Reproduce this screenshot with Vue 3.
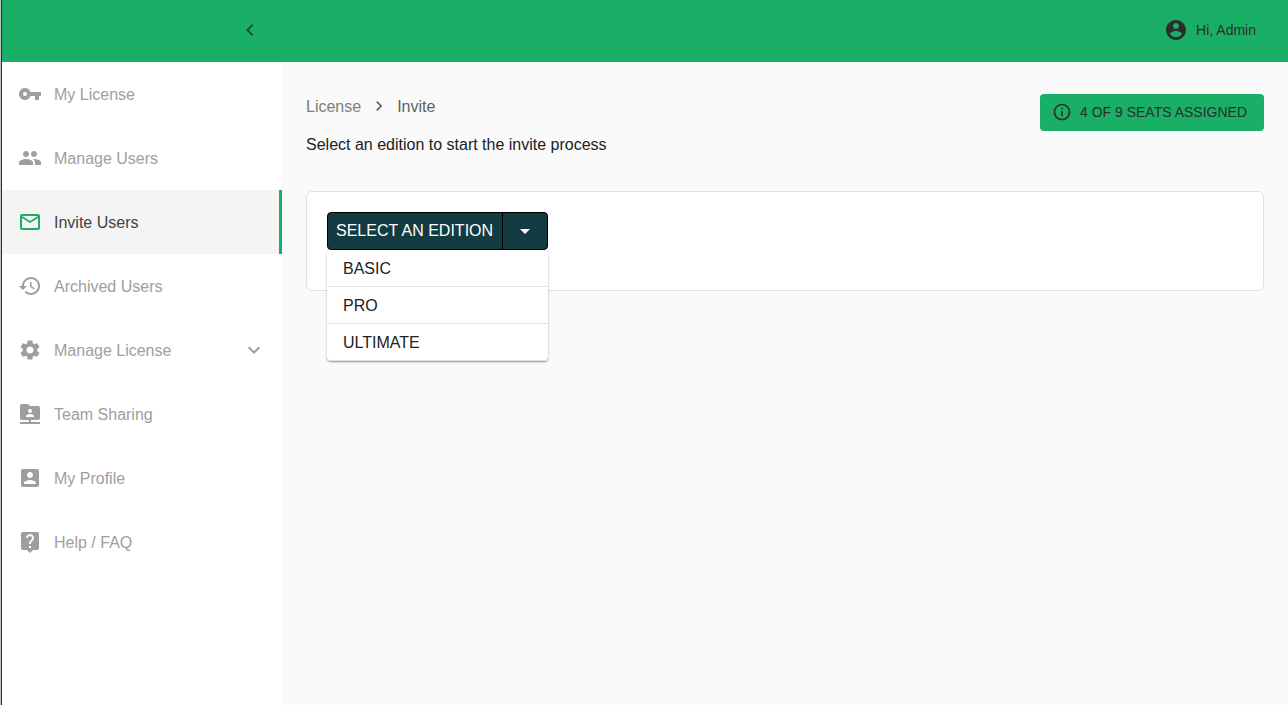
<script setup>
import { ref } from 'vue'

const icons = {
  key: 'M12.65 10C11.83 7.67 9.61 6 7 6c-3.31 0-6 2.69-6 6s2.69 6 6 6c2.61 0 4.83-1.67 5.65-4H17v4h4v-4h2v-4H12.65zM7 14c-1.1 0-2-.9-2-2s.9-2 2-2 2 .9 2 2-.9 2-2 2z',
  people: 'M16 11c1.66 0 2.99-1.34 2.99-3S17.66 5 16 5c-1.66 0-3 1.34-3 3s1.34 3 3 3zm-8 0c1.66 0 2.99-1.34 2.99-3S9.66 5 8 5C6.34 5 5 6.34 5 8s1.34 3 3 3zm0 2c-2.33 0-7 1.17-7 3.5V19h14v-2.5c0-2.33-4.67-3.5-7-3.5zm8 0c-.29 0-.62.02-.97.05 1.16.84 1.97 1.97 1.97 3.45V19h6v-2.5c0-2.33-4.67-3.5-7-3.5z',
  mail: 'M20 4H4c-1.1 0-1.99.9-1.99 2L2 18c0 1.1.9 2 2 2h16c1.1 0 2-.9 2-2V6c0-1.1-.9-2-2-2zm0 14H4V8l8 5 8-5v10zm-8-7L4 6h16l-8 5z',
  history: 'M13 3c-4.97 0-9 4.03-9 9H1l3.89 3.89.07.14L9 12H6c0-3.87 3.13-7 7-7s7 3.13 7 7-3.13 7-7 7c-1.93 0-3.68-.79-4.94-2.06l-1.42 1.42C8.27 19.99 10.51 21 13 21c4.97 0 9-4.03 9-9s-4.03-9-9-9zm-1 5v5l4.28 2.54.72-1.21-3.5-2.08V8H12z',
  settings: 'M19.14 12.94c.04-.3.06-.61.06-.94 0-.32-.02-.64-.07-.94l2.03-1.58c.18-.14.23-.41.12-.61l-1.92-3.32c-.12-.22-.37-.29-.59-.22l-2.39.96c-.5-.38-1.03-.7-1.62-.94l-.36-2.54c-.04-.24-.24-.41-.48-.41h-3.84c-.24 0-.43.17-.47.41l-.36 2.54c-.59.24-1.13.57-1.62.94l-2.39-.96c-.22-.08-.47 0-.59.22L2.74 8.87c-.12.21-.08.47.12.61l2.03 1.58c-.05.3-.09.63-.09.94s.02.64.07.94l-2.03 1.58c-.18.14-.23.41-.12.61l1.92 3.32c.12.22.37.29.59.22l2.39-.96c.5.38 1.03.7 1.62.94l.36 2.54c.05.24.24.41.48.41h3.84c.24 0 .44-.17.47-.41l.36-2.54c.59-.24 1.13-.56 1.62-.94l2.39.96c.22.08.47 0 .59-.22l1.92-3.32c.12-.22.07-.47-.12-.61l-2.01-1.58zM12 15.6c-1.98 0-3.6-1.62-3.6-3.6s1.62-3.6 3.6-3.6 3.6 1.62 3.6 3.6-1.62 3.6-3.6 3.6z',
  share: 'M4 2C2.9 2 2 2.9 2 4v12c0 1.1.9 2 2 2h7v2H2v2h20v-2h-9v-2h7c1.1 0 2-.9 2-2V6c0-1.1-.9-2-2-2h-8l-2-2H4zM12 7a2 2 0 1 1 0 4 2 2 0 0 1 0-4zM8 15v-1c0-1.33 2.67-2 4-2s4 .67 4 2v1H8z',
  profile: 'M3 5v14c0 1.1.89 2 2 2h14c1.1 0 2-.9 2-2V5c0-1.1-.9-2-2-2H5c-1.11 0-2 .9-2 2zm12 4c0 1.66-1.34 3-3 3s-3-1.34-3-3 1.34-3 3-3 3 1.34 3 3zm-9 8c0-2 4-3.1 6-3.1s6 1.1 6 3.1v1H6v-1z',
  help: 'M19 2H5c-1.11 0-2 .9-2 2v14c0 1.1.89 2 2 2h4l3 3 3-3h4c1.1 0 2-.9 2-2V4c0-1.1-.9-2-2-2zm-6 16h-2v-2h2v2zm2.07-7.75l-.9.92C13.45 11.9 13 12.5 13 14h-2v-.5c0-1.1.45-2.1 1.17-2.83l1.24-1.26c.37-.36.59-.86.59-1.41 0-1.1-.9-2-2-2s-2 .9-2 2H8c0-2.21 1.79-4 4-4s4 1.79 4 4c0 .88-.36 1.68-.93 2.25z',
}

const navItems = [
  { label: 'My License', icon: icons.key },
  { label: 'Manage Users', icon: icons.people },
  { label: 'Invite Users', icon: icons.mail, active: true },
  { label: 'Archived Users', icon: icons.history },
  { label: 'Manage License', icon: icons.settings, expandable: true },
  { label: 'Team Sharing', icon: icons.share },
  { label: 'My Profile', icon: icons.profile },
  { label: 'Help / FAQ', icon: icons.help },
]

const editions = ['BASIC', 'PRO', 'ULTIMATE']
const selected = ref('SELECT AN EDITION')
const open = ref(true)

function choose(edition) {
  selected.value = edition
  open.value = false
}
</script>

<template>
  <div class="app">
    <header class="topbar">
      <div class="topbar-side">
        <button class="icon-button" type="button" aria-label="Collapse menu">
          <svg class="icon" viewBox="0 0 24 24"><path d="M15.41 7.41L14 6l-6 6 6 6 1.41-1.41L10.83 12z" /></svg>
        </button>
      </div>
      <button class="account" type="button">
        <svg class="icon" viewBox="0 0 24 24"><path d="M12 2C6.48 2 2 6.48 2 12s4.48 10 10 10 10-4.48 10-10S17.52 2 12 2zm0 3c1.66 0 3 1.34 3 3s-1.34 3-3 3-3-1.34-3-3 1.34-3 3-3zm0 14.2c-2.5 0-4.71-1.28-6-3.22.03-1.99 4-3.08 6-3.08 1.99 0 5.97 1.09 6 3.08-1.29 1.94-3.5 3.22-6 3.22z" /></svg>
        <span>Hi, Admin</span>
      </button>
    </header>

    <div class="body">
      <nav class="sidebar" aria-label="Main">
        <a
          v-for="item in navItems"
          :key="item.label"
          href="#"
          class="nav-item"
          :class="{ active: item.active }"
          :aria-current="item.active ? 'page' : null"
        >
          <svg class="icon" viewBox="0 0 24 24"><path fill-rule="evenodd" :d="item.icon" /></svg>
          <span class="nav-label">{{ item.label }}</span>
          <svg v-if="item.expandable" class="icon" viewBox="0 0 24 24"><path d="M16.59 8.59L12 13.17 7.41 8.59 6 10l6 6 6-6z" /></svg>
        </a>
      </nav>

      <main class="content">
        <div class="page-head">
          <div>
            <nav class="breadcrumb" aria-label="Breadcrumb">
              <a href="#" class="crumb">License</a>
              <svg class="icon-small" viewBox="0 0 24 24"><path d="M10 6L8.59 7.41 13.17 12l-4.58 4.59L10 18l6-6z" /></svg>
              <span class="crumb-current">Invite</span>
            </nav>
            <p class="intro">Select an edition to start the invite process</p>
          </div>
          <button class="seats" type="button">
            <svg class="icon-small" viewBox="0 0 24 24"><path d="M11 7h2v2h-2zm0 4h2v6h-2zm1-9C6.48 2 2 6.48 2 12s4.48 10 10 10 10-4.48 10-10S17.52 2 12 2zm0 18c-4.41 0-8-3.59-8-8s3.59-8 8-8 8 3.59 8 8-3.59 8-8 8z" /></svg>
            <span>4 OF 9 SEATS ASSIGNED</span>
          </button>
        </div>

        <section class="card">
          <div class="picker">
            <div class="split">
              <button class="split-main" type="button">{{ selected }}</button>
              <button class="split-toggle" type="button" aria-label="Show editions" :aria-expanded="open" @click="open = !open">
                <svg class="icon" viewBox="0 0 24 24"><path d="M7 10l5 5 5-5z" /></svg>
              </button>
            </div>
            <ul v-if="open" class="menu">
              <li v-for="edition in editions" :key="edition">
                <button class="menu-item" type="button" @click="choose(edition)">{{ edition }}</button>
              </li>
            </ul>
          </div>
        </section>
      </main>
    </div>
  </div>
</template>

<style>
body {
  margin: 0;
  background: #fafafa;
}
</style>

<style scoped>
.app {
  box-sizing: border-box;
  display: flex;
  flex-direction: column;
  min-height: 100vh;
  border-left: 1px solid #282c2e;
  box-shadow: -1px 0 0 #c4c4c4;
  margin-left: 1px;
  background: #fafafa;
  color: #212121;
  font-family: "Liberation Sans", Arial, sans-serif;
  font-size: 16px;
  line-height: 25px;
}

button {
  margin: 0;
  padding: 0;
  border: 0;
  background: none;
  color: inherit;
  font: inherit;
  cursor: pointer;
}

a {
  color: inherit;
  text-decoration: none;
}

.icon {
  flex: none;
  display: block;
  width: 24px;
  height: 24px;
  fill: currentColor;
}

.icon-small {
  flex: none;
  display: block;
  width: 20px;
  height: 20px;
  fill: currentColor;
}

.topbar {
  display: flex;
  align-items: center;
  justify-content: space-between;
  height: 62px;
  padding-bottom: 2px;
  box-sizing: border-box;
  background: #19af66;
}

.topbar-side {
  box-sizing: border-box;
  display: flex;
  justify-content: flex-end;
  width: 280px;
  padding-right: 20px;
}

.icon-button {
  color: #14533a;
}

.account {
  display: flex;
  align-items: center;
  gap: 8px;
  margin-right: 32px;
  color: #2d2d2d;
  font-size: 14px;
  line-height: 24px;
}

.body {
  flex: 1;
  display: flex;
}

.sidebar {
  flex: none;
  width: 280px;
  background: #fff;
}

.nav-item {
  box-sizing: border-box;
  display: flex;
  align-items: center;
  gap: 12px;
  height: 64px;
  padding: 0 16px;
  color: #9e9e9e;
}

.nav-label {
  flex: 1;
}

.nav-item.active {
  border-right: 3px solid #19af66;
  background: #f4f4f4;
  color: #424242;
}

.nav-item.active .icon {
  color: #19af66;
}

.content {
  flex: 1;
  min-width: 0;
  padding: 32px 24px;
}

.page-head {
  display: flex;
  align-items: flex-start;
  justify-content: space-between;
}

.breadcrumb {
  display: flex;
  align-items: center;
  gap: 8px;
  height: 24px;
  color: #616161;
}

.crumb {
  color: #7d7d7d;
}

.intro {
  margin: 14px 0 0;
}

.seats {
  box-sizing: border-box;
  display: flex;
  align-items: center;
  gap: 8px;
  min-width: 224px;
  height: 37px;
  padding: 0 16px 1px 12px;
  border-radius: 4px;
  background: #19af66;
  color: #2d2d2d;
  font-size: 14px;
  line-height: 24px;
}

.card {
  box-sizing: border-box;
  min-height: 100px;
  margin-top: 34px;
  padding: 20px;
  border: 1px solid #e0e0e0;
  border-radius: 6px;
  background: #fff;
}

.picker {
  position: relative;
  width: max-content;
  min-width: 221px;
}

.split {
  display: flex;
  height: 38px;
  box-sizing: border-box;
  overflow: hidden;
  border: 1px solid #000;
  border-radius: 4px;
  background: #133b42;
  color: #fff;
  line-height: 24px;
}

.split-main {
  flex: 1;
  padding: 0 8px;
  text-align: left;
}

.split-toggle {
  padding: 0 10px;
  border-left: 1px solid #000;
}

.menu {
  position: absolute;
  top: 100%;
  left: 0;
  right: 0;
  margin: 0;
  padding: 0;
  list-style: none;
  border-radius: 4px;
  background: #fff;
  box-shadow: 0 1px 3px rgba(0, 0, 0, 0.2), 0 1px 1px rgba(0, 0, 0, 0.24);
}

.menu-item {
  display: block;
  width: 100%;
  height: 37px;
  padding: 0 16px;
  border-bottom: 1px solid #e0e0e0;
  text-align: left;
}

.menu li:last-child .menu-item {
  border-radius: 0 0 4px 4px;
}
</style>
